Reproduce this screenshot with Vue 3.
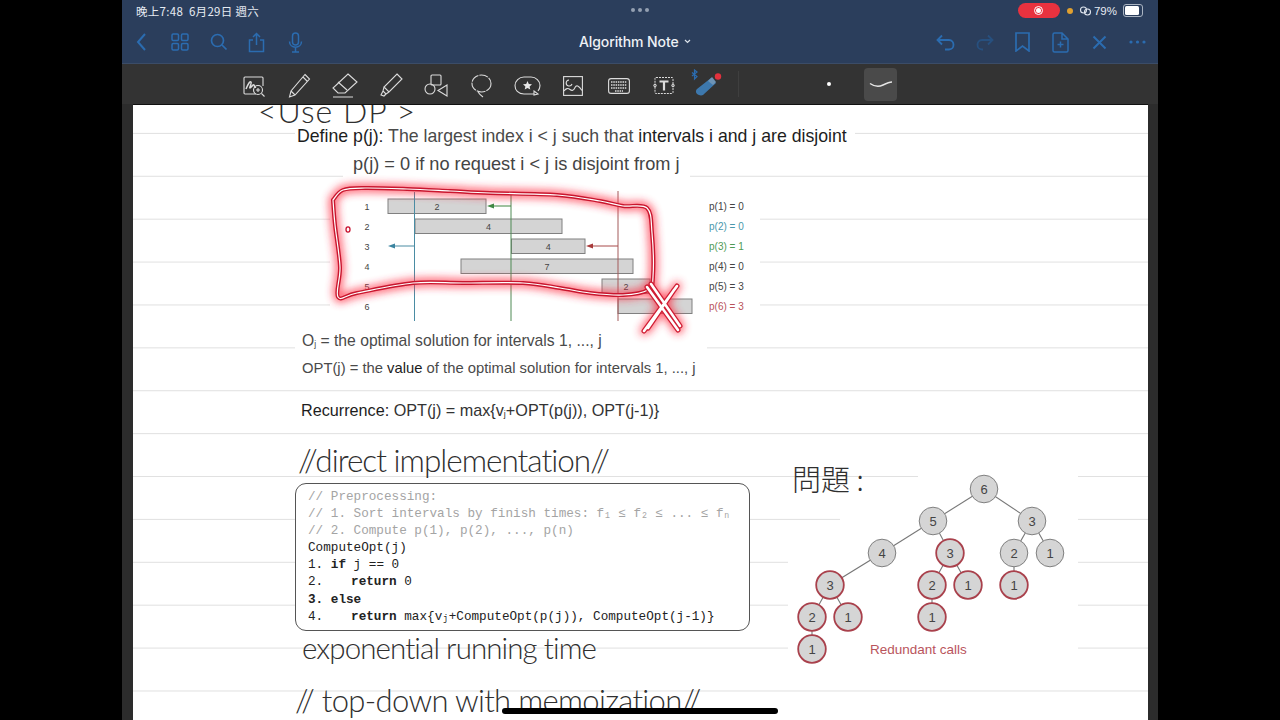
<script setup>
const smooth = (p) => {
  let d = `M${p[0][0]} ${p[0][1]}`
  for (let i = 0; i < p.length - 1; i++) {
    const a = p[Math.max(i - 1, 0)], b = p[i], c = p[i + 1], e = p[Math.min(i + 2, p.length - 1)]
    d += ` C${b[0] + (c[0] - a[0]) / 6} ${b[1] + (c[1] - a[1]) / 6} ${c[0] - (e[0] - b[0]) / 6} ${c[1] - (e[1] - b[1]) / 6} ${c[0]} ${c[1]}`
  }
  return d
}
const loop = smooth([[333,200],[343,190],[365,188],[407,189],[450,191],[490,193],[557,195],[600,201],[623,206],[647,208],[652,233],[653,277],[648,290],[623,295],[590,293],[560,288],[523,283],[463,283],[413,283],[357,293],[338,297],[340,267],[335,225],[333,200]])
const patches = [
  [295,120,560,34],[343,156,347,28],[330,180,430,148],[295,330,412,54],[295,398,380,26],
  [918,466,160,60],[840,510,238,50],[788,552,290,118]
]
const bars = [
  { x: 388, y: 199, w: 98, t: '2' },{ x: 415, y: 219, w: 147, t: '4' },{ x: 511.5, y: 239, w: 73.5, t: '4' },
  { x: 461, y: 259, w: 172, t: '7' },{ x: 602, y: 279, w: 48, t: '2' },{ x: 618, y: 299, w: 74, t: '' }
]
const rows = [
  { n: 1, p: 'p(1) = 0', c: '#444' },{ n: 2, p: 'p(2) = 0', c: '#4a97ab' },{ n: 3, p: 'p(3) = 1', c: '#4f9a55' },
  { n: 4, p: 'p(4) = 0', c: '#444' },{ n: 5, p: 'p(5) = 3', c: '#444' },{ n: 6, p: 'p(6) = 3', c: '#b9525a' }
]
const nodes = [
  [984,489,6,0],[933,521,5,0],[1032,521,3,0],[882,553,4,0],[950,553,3,1],[1014,553,2,0],[1050,553,1,0],
  [830,585,3,1],[932,585,2,1],[968,585,1,1],[1014,585,1,1],[812,617,2,1],[848,617,1,1],[932,617,1,1],[812,649,1,1]
]
const edges = [[0,1],[0,2],[1,3],[1,4],[2,5],[2,6],[3,7],[4,8],[4,9],[5,10],[7,11],[7,12],[8,13],[11,14]]
const cross = 'M677 286 644 331M647 287 678 330M651 284 680 326M674 290 648 328'
</script>

<template>
  <div class="screen">
    <div class="app">
      <header class="bars">
        <div class="status">
          <span class="clock">晚上7:48&nbsp;&nbsp;6月29日 週六</span>
          <div class="grip"><i></i><i></i><i></i></div>
          <div class="sys">
            <span class="rec"><b></b></span>
            <span class="amber"></span>
            <svg width="13" height="10" viewBox="0 0 13 10" fill="none" stroke="#dfe5ee" stroke-width="1.1"><circle cx="4.5" cy="4" r="3"/><circle cx="8.5" cy="6" r="3"/></svg>
            <span class="pct">79%</span>
            <span class="battery"><b></b></span>
          </div>
        </div>
        <nav class="nav">
          <div class="nav-left">
            <svg width="12" height="20" viewBox="0 0 12 20" fill="none" stroke="#2b6cb0" stroke-width="2"><path d="M10 2 3 10l7 8"/></svg>
            <svg class="gap1" width="18" height="18" viewBox="0 0 18 18" fill="none" stroke="#2b6cb0" stroke-width="1.5"><rect x="1" y="1" width="6.5" height="6.5" rx="1.2"/><rect x="10.5" y="1" width="6.5" height="6.5" rx="1.2"/><rect x="1" y="10.5" width="6.5" height="6.5" rx="1.2"/><rect x="10.5" y="10.5" width="6.5" height="6.5" rx="1.2"/></svg>
            <svg class="gap2" width="18" height="18" viewBox="0 0 18 18" fill="none" stroke="#2b6cb0" stroke-width="1.7"><circle cx="7.5" cy="7.5" r="6"/><path d="m12 12 4.500 4.500"/></svg>
            <svg class="gap3" width="17" height="21" viewBox="0 0 17 21" fill="none" stroke="#2b6cb0" stroke-width="1.5"><path d="M5 8H1.500v11.500h14V8H12M8.500 13V1.500M5 5l3.500-3.500L12 5"/></svg>
            <svg class="gap4" width="15" height="21" viewBox="0 0 15 21" fill="none" stroke="#2b6cb0" stroke-width="1.5"><rect x="4.500" y="1" width="6" height="12" rx="3"/><path d="M1.500 9.500c0 7.500 12 7.500 12 0M7.500 16v3.500M4 20h7"/></svg>
          </div>
          <div class="title">Algorithm Note <svg width="7" height="5" viewBox="0 0 7 5" fill="none" stroke="#dce3ec" stroke-width="1.2"><path d="m1 1 2.500 2.500L6 1"/></svg></div>
          <div class="nav-right">
            <svg width="20" height="17" viewBox="0 0 20 17" fill="none" stroke="#2b6cb0" stroke-width="1.800"><path d="M6 1.500 1.500 6 6 10.500M2 6h11c6 0 6 9.500 0 9.500H9"/></svg>
            <svg class="r1" width="19" height="17" viewBox="0 0 19 17" fill="none" stroke="#27507f" stroke-width="1.800"><path d="M13 1.500 17.500 6 13 10.500M17 6H7c-6 0-6 9.500 0 9.500h1"/></svg>
            <svg class="r2" width="15" height="20" viewBox="0 0 15 20" fill="none" stroke="#2b6cb0" stroke-width="1.700"><path d="M1 1h13v18l-6.500-5L1 19z"/></svg>
            <svg class="r3" width="17" height="21" viewBox="0 0 17 21" fill="none" stroke="#2b6cb0" stroke-width="1.500"><path d="M1 2.500a1.500 1.500 0 0 1 1.500-1.500H10l6 6v11.500a1.500 1.500 0 0 1-1.500 1.500h-12A1.500 1.500 0 0 1 1 18.500zM10 1v6h6M8.500 9.500v6M5.500 12.500h6"/></svg>
            <svg class="r4" width="15" height="15" viewBox="0 0 15 15" fill="none" stroke="#2b6cb0" stroke-width="2"><path d="m1.500 1.500 12 12M13.500 1.500l-12 12"/></svg>
            <svg class="r5" width="17" height="4" viewBox="0 0 17 4" fill="#2b6cb0"><circle cx="2" cy="2" r="1.600"/><circle cx="8.500" cy="2" r="1.600"/><circle cx="15" cy="2" r="1.600"/></svg>
          </div>
        </nav>
      </header>

      <div class="tools">
        <svg class="t0" width="22" height="22" viewBox="0 0 22 22" fill="none" stroke="#dcdcdc" stroke-width="1.100"><path d="M13 19H2a1 1 0 0 1-1-1V3a1 1 0 0 1 1-1h17a1 1 0 0 1 1 1v8"/><path d="M3 14c2-5 4-8 5-7s-2 6-1 6 3-4 4-3 0 3 2 2" stroke-width="1.500"/><circle cx="15" cy="15" r="4.500"/><path d="m18.500 18.500 3 3M15 13v4M13 15h4"/></svg>
        <svg class="t1" width="23" height="25" viewBox="0 0 23 25" fill="none" stroke="#dcdcdc" stroke-width="1.100"><path d="M17 1.500 21.500 6 7 22 1.500 24 3 18zM3 18l4 4M15 4l4.500 4.500"/></svg>
        <svg class="t2" width="26" height="25" viewBox="0 0 26 25" fill="none" stroke="#dcdcdc" stroke-width="1.100"><path d="M16 1 25 9 13 20H6l-5-5zM6 9l9 8M1 24h20"/></svg>
        <svg class="t3" width="23" height="25" viewBox="0 0 23 25" fill="none" stroke="#dcdcdc" stroke-width="1.100"><path d="M17 1 22 6 9 19l-5-5zM4 14l-1 4 3 3 3-2M3 18l-2 4 3 1 2-2"/></svg>
        <svg class="t4" width="24" height="23" viewBox="0 0 24 23" fill="none" stroke="#dcdcdc" stroke-width="1.100"><rect x="7" y="1" width="10" height="10" rx="1"/><circle cx="6" cy="15" r="5"/><path d="M23 11v11l-9-5.500z"/></svg>
        <svg class="t5" width="21" height="24" viewBox="0 0 21 24" fill="none" stroke="#dcdcdc" stroke-width="1.100" stroke-dasharray="9 1"><ellipse cx="10.500" cy="9.500" rx="9.500" ry="8.500"/><path d="M7 18q2 3 5 5"/></svg>
        <svg class="t6" width="27" height="20" viewBox="0 0 27 20" fill="none" stroke="#dcdcdc" stroke-width="1.100"><path d="M20 18H10C4 18 1 14 1 9.500S5 1 10 1h7c5 0 9 4 9 8.500q0 3-2 5.500"/><path d="m20 15 4 3-4 1z"/><path fill="#e8e8e8" stroke="none" d="m13.500 5 1.300 3 3.200.3-2.400 2.100.7 3.100-2.800-1.600-2.800 1.600.7-3.100L9 8.300l3.200-.3z"/></svg>
        <svg class="t7" width="20" height="20" viewBox="0 0 20 20" fill="none" stroke="#dcdcdc" stroke-width="1.100"><rect x=".6" y=".6" width="18.800" height="18.800"/><path d="M1 15q3-4 6-1.500t5-2 7 3M6 4a3 3 0 1 0 3 4"/></svg>
        <svg class="t8" width="22" height="16" viewBox="0 0 22 16" fill="none" stroke="#dcdcdc" stroke-width="1.100"><rect x=".6" y=".6" width="20.800" height="14.800" rx="2.500"/><path d="M3 4h16M3 7h16M3 10h16M7 13h8" stroke-dasharray="1.500 .8" stroke-width="1.500"/></svg>
        <svg class="t9" width="22" height="19" viewBox="0 0 22 19" fill="none" stroke="#dcdcdc" stroke-width="1"><rect x="2" y="1.500" width="18" height="16" rx="1" stroke-dasharray="2 1"/><circle cx="2" cy="9.500" r="1.300"/><circle cx="20" cy="9.500" r="1.300"/><path stroke-width="2.200" d="M6.500 5.500h9M11 5.500v9"/></svg>
        <svg class="t10" width="33" height="27" viewBox="0 0 33 27" fill="none"><path d="M2 3.500 7 7.500 4.500 10V1L7 3 2 7" stroke="#2b6cb0" stroke-width="1.200"/><path d="M9 26c-3-1-4-4-2-6l14-11 5 5-13 12c-1 .5-3 .5-4 0z" fill="#3d78ad"/><path d="m18 12 4-4 4 5-3 3z" fill="#6d93b5"/><circle cx="28" cy="7.500" r="3.200" fill="#e2313d"/></svg>
        <span class="divider"></span>
        <span class="dot"></span>
        <span class="stroke-btn"><svg width="24" height="8" viewBox="0 0 24 8" fill="none"><path d="M1 3.500c5 3.500 9 3.500 13 1.500s6-3 9-3" stroke="#e6e6e6" stroke-width="1.500"/></svg></span>
      </div>

      <main class="page">
        <svg class="canvas" width="1015" height="615" viewBox="133 105 1015 615">
          <defs>
            <filter id="glow" x="-20%" y="-20%" width="140%" height="140%"><feGaussianBlur stdDeviation="4.500"/></filter>
          </defs>
          <rect v-for="(p, i) in patches" :key="i" :x="p[0]" :y="p[1]" :width="p[2]" :height="p[3]" fill="#fff"/>

          <g class="diagram">
            <g v-for="b in bars" :key="b.x">
              <rect :x="b.x" :y="b.y" :width="b.w" height="14.500" fill="#d4d4d4" stroke="#808080"/>
              <text :x="b.x + b.w / 2" :y="b.y + 10.500" text-anchor="middle">{{ b.t }}</text>
            </g>
            <path d="M414.500 192V321" stroke="#4a8ca3" fill="none"/>
            <path d="M511 192V321" stroke="#4f8a55" fill="none"/>
            <path d="M618 191V321" stroke="#a35a5a" fill="none"/>
            <path d="M511 206H493" stroke="#3d8a45"/><path d="m487 206 7-2.500v5z" fill="#3d8a45"/>
            <path d="M414 246H394" stroke="#4a8ca3"/><path d="m388 246 7-2.500v5z" fill="#3b84a0"/>
            <path d="M618 246H592" stroke="#a84a4a"/><path d="m586 246 7-2.500v5z" fill="#a83a3a"/>
            <g v-for="(r, i) in rows" :key="r.n">
              <text x="367" :y="209.500 + i * 20" text-anchor="middle">{{ r.n }}</text>
              <text class="plabel" x="709" :y="210 + i * 20" :style="{ fill: r.c }">{{ r.p }}</text>
            </g>
          </g>

          <g fill="none" stroke-linecap="round" stroke-linejoin="round">
            <g filter="url(#glow)" stroke="#ff2a40" stroke-width="8" opacity=".8">
              <path :d="loop"/><path :d="cross"/>
            </g>
            <path :d="loop" stroke="#c9162e" stroke-width="4"/>
            <path :d="loop" stroke="#fff" stroke-width="1.200"/>
            <path :d="cross" stroke="#cf1d33" stroke-width="5"/>
            <path :d="cross" stroke="#fff" stroke-width="2.600"/>
            <ellipse cx="348" cy="229.500" rx="2" ry="2.600" stroke="#c8102e" stroke-width="1.300"/>
          </g>

          <g stroke="#777" stroke-width="1.100">
            <line v-for="(e, i) in edges" :key="i" :x1="nodes[e[0]][0]" :y1="nodes[e[0]][1]" :x2="nodes[e[1]][0]" :y2="nodes[e[1]][1]"/>
          </g>
          <g v-for="(n, i) in nodes" :key="i">
            <circle :cx="n[0]" :cy="n[1]" r="13.800" fill="#d5d5d5" :stroke="n[3] ? '#a9414c' : '#808080'" :stroke-width="n[3] ? 1.800 : 1"/>
            <text class="node" :x="n[0]" :y="n[1] + 4.500" text-anchor="middle">{{ n[2] }}</text>
          </g>
          <text class="redundant" x="870" y="653.500">Redundant calls</text>
        </svg>

        <div class="hand use">&lt;Use DP &gt;</div>
        <div class="print define"><span class="dk">Define p(j):</span> The largest index i &lt; j such that <span class="dk">intervals i and j are disjoint</span></div>
        <div class="print pzero">p(j) = 0 if no request i &lt; j is disjoint from j</div>
        <div class="print oj">O<sub>j</sub> = the optimal solution for intervals 1, ..., j</div>
        <div class="print optj">OPT(j) = the <span class="dk">value</span> of the optimal solution for intervals 1, ..., j</div>
        <div class="print rec-line"><span class="dk">Recurrence:</span> OPT(j) = max{v<sub>j</sub>+OPT(p(j)), OPT(j-1)}</div>

        <div class="hand direct">//direct implementation//</div>
        <div class="code">
          <div class="c">// Preprocessing:</div>
          <div class="c">// 1. Sort intervals by finish times: f<sub>1</sub> ≤ f<sub>2</sub> ≤ ... ≤ f<sub>n</sub></div>
          <div class="c">// 2. Compute p(1), p(2), ..., p(n)</div>
          <div>ComputeOpt(j)</div>
          <div>1. <b>if</b> j == 0</div>
          <div>2.&nbsp;&nbsp;&nbsp;&nbsp;<b class="ret">return</b> 0</div>
          <div><b>3. else</b></div>
          <div>4.&nbsp;&nbsp;&nbsp;&nbsp;<b class="ret">return</b> max{v<sub>j</sub>+ComputeOpt(p(j)), ComputeOpt(j-1)}</div>
        </div>
        <div class="hand expo">exponential running time</div>
        <div class="hand memo">// top-down with memoization//</div>
        <div class="hand wenti">問題 :</div>
        <div class="home"></div>
      </main>
    </div>
  </div>
</template>

<style>
html, body { margin: 0; background: #000; }
</style>

<style scoped>
.screen { width: 1280px; height: 720px; background: #000; display: flex; justify-content: center; overflow: hidden; font-family: "Liberation Sans", Arial, sans-serif; }
.app { width: 1036px; height: 720px; display: flex; flex-direction: column; background: #2c2c2c; }
.bars { height: 64px; background: #2b3e5c; display: flex; flex-direction: column; border-bottom: 1px solid #3b4c67; box-sizing: border-box; flex: none; }
.status { height: 21px; display: flex; align-items: center; padding: 0 15px 0 14px; position: relative; color: #e6ebf2; font-size: 11.500px; }
.clock { font-family: "Noto Sans CJK TC", "Liberation Sans", sans-serif; letter-spacing: .3px; }
.grip { position: absolute; left: 509px; top: 8px; display: flex; gap: 3px; }
.grip i { width: 4px; height: 4px; border-radius: 50%; background: #94a0b2; }
.sys { margin-left: auto; display: flex; align-items: center; }
.rec { width: 42px; height: 15px; background: #e8323f; border-radius: 8px; display: flex; align-items: center; justify-content: center; }
.rec b { width: 5px; height: 5px; border-radius: 50%; background: #fff; outline: 1px solid #fff; outline-offset: 1.500px; }
.amber { width: 6px; height: 6px; border-radius: 50%; background: #e0a030; margin: 0 6px 0 7px; }
.pct { margin: 0 6px 0 2px; font-size: 11.500px; }
.battery { width: 16px; height: 9px; border: 1px solid #aab4c2; border-radius: 3px; padding: 1px; box-sizing: content-box; display: flex; }
.battery b { width: 14px; background: #fff; border-radius: 1.500px; }
.nav { flex: 1; display: flex; align-items: center; justify-content: space-between; padding: 0 12px 0 13px; position: relative; }
.nav-left, .nav-right { display: flex; align-items: center; }
.gap1 { margin-left: 24px; } .gap2 { margin-left: 21px; } .gap3 { margin-left: 20px; } .gap4 { margin-left: 23px; }
.r1 { margin-left: 19px; } .r2 { margin-left: 21px; } .r3 { margin-left: 22px; } .r4 { margin-left: 23px; } .r5 { margin-left: 22px; }
.title { position: absolute; left: 457px; top: 12px; color: #eef1f5; font-size: 14px; font-weight: 500; display: flex; align-items: center; gap: 5px; font-family: Inter, "Liberation Sans", sans-serif; letter-spacing: -.1px; }
.tools { height: 40px; background: #333; display: flex; align-items: center; padding: 3px 0 0 121px; box-sizing: border-box; flex: none; }
.t1 { margin-left: 23px; } .t2 { margin-left: 21px; } .t3 { margin-left: 22px; } .t4 { margin-left: 21px; } .t5 { margin-left: 23px; }
.t6 { margin-left: 22px; } .t7 { margin-left: 22px; } .t8 { margin-left: 25px; } .t9 { margin-left: 23px; } .t10 { margin-left: 15px; margin-top: -6px; }
.divider { width: 1px; height: 26px; background: #3f3f3f; margin: -3px 0 0 15px; }
.dot { width: 4px; height: 4px; background: #fff; border-radius: 50%; margin: -3px 0 0 88px; }
.stroke-btn { width: 33px; height: 33px; margin: -3px 0 0 33px; background: #4a4a4a; border-radius: 4px; display: flex; align-items: center; justify-content: center; }
.page {
  flex: 1; margin: 0 10px 0 11px; position: relative; overflow: hidden; background-color: #fff;
  background-image: linear-gradient(to bottom, transparent 41.400px, #e0e0e0 41.400px);
  background-size: 100% 42.900px; background-position: 0 -14px;
  border-top: 1px solid #111; box-sizing: border-box;
}
.canvas { position: absolute; left: 0; top: 0; }
.diagram text { font: 9px "Liberation Sans", sans-serif; fill: #444; }
.diagram .plabel { font-size: 10px; }
.node { font: 13px "Liberation Sans", sans-serif; fill: #444; }
.redundant { font: 13.500px "Liberation Sans", sans-serif; fill: #b9545c; }
.print { position: absolute; white-space: nowrap; color: #4a4a4a; line-height: 22px; }
.print sub { font-size: .55em; line-height: 0; vertical-align: -.15em; }
.dk { color: #1d1d1d; }
.define { left: 164px; top: 20px; font-size: 17.700px; }
.pzero { left: 220px; top: 48px; font-size: 18.200px; color: #444; }
.oj { left: 169px; top: 225px; font-size: 15.700px; }
.optj { left: 169px; top: 252px; font-size: 14.800px; }
.rec-line { left: 168px; top: 294px; font-size: 16.200px; color: #333; }
.code { position: absolute; left: 162px; top: 378px; width: 455px; height: 148px; box-sizing: border-box; border: 1.500px solid #555; border-radius: 11px; background: #fff; padding: 4px 0 0 12px; font: 12.670px/17.100px "Liberation Mono", monospace; color: #222; }
.code .c { color: #a4a4a4; }
.code .ret { margin-left: -2.500px; }
.code sub { font-size: .65em; line-height: 0; display: inline-block; width: 6.500px; text-align: center; vertical-align: -.15em; }
.hand { position: absolute; white-space: nowrap; color: #2f2f2f; font-family: Lato, "Noto Sans CJK TC", sans-serif; font-weight: 300; line-height: 40px; }
.use { left: 125px; top: -7px; font-size: 32px; letter-spacing: 1px; line-height: 26px; }
.direct { left: 165px; top: 335px; font-size: 31.500px; letter-spacing: -1px; }
.expo { left: 169px; top: 523px; font-size: 29.500px; letter-spacing: -.9px; }
.memo { left: 162px; top: 575px; font-size: 31px; letter-spacing: -.67px; }
.wenti { left: 659px; top: 353px; font-size: 29px; font-family: "Noto Sans CJK TC", sans-serif; font-weight: 300; }
.home { position: absolute; left: 369px; top: 603px; width: 276px; height: 6px; background: #000; border-radius: 3px; }
</style>
